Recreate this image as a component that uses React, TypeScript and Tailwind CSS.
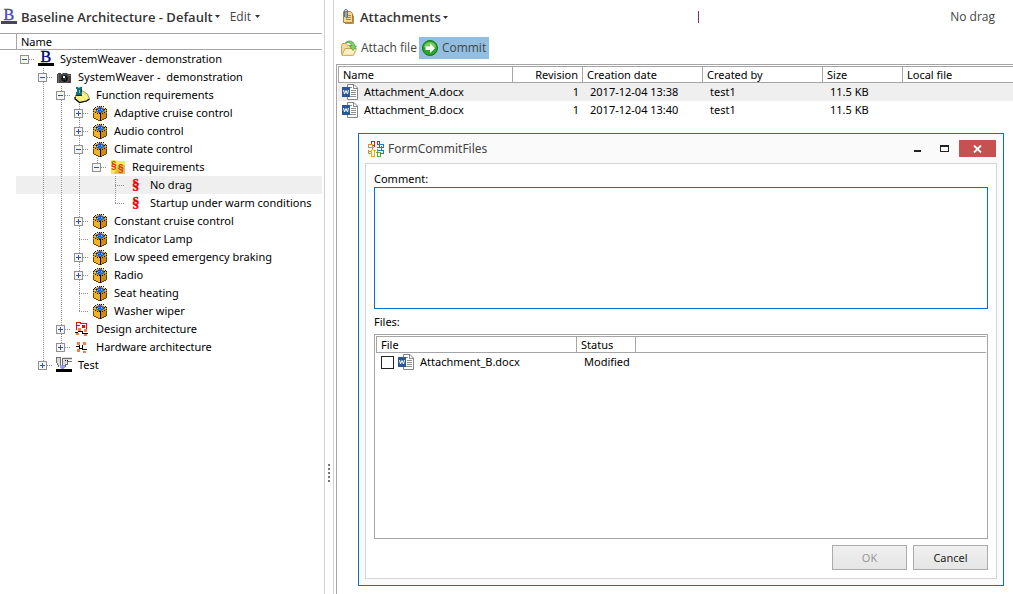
import type { ReactNode } from "react";

type IconName = "baseline" | "camera" | "note" | "box" | "requirements" | "section" | "design" | "hardware" | "test";

interface TreeItem {
  label: string;
  icon: IconName;
  expanded?: boolean;
  selected?: boolean;
  children?: TreeItem[];
}

const tree: TreeItem[] = [
  {
    label: "SystemWeaver - demonstration",
    icon: "baseline",
    expanded: true,
    children: [
      {
        label: "SystemWeaver -  demonstration",
        icon: "camera",
        expanded: true,
        children: [
          {
            label: "Function requirements",
            icon: "note",
            expanded: true,
            children: [
              { label: "Adaptive cruise control", icon: "box", expanded: false },
              { label: "Audio control", icon: "box", expanded: false },
              {
                label: "Climate control",
                icon: "box",
                expanded: true,
                children: [
                  {
                    label: "Requirements",
                    icon: "requirements",
                    expanded: true,
                    children: [
                      { label: "No drag", icon: "section", selected: true },
                      { label: "Startup under warm conditions", icon: "section" },
                    ],
                  },
                ],
              },
              { label: "Constant cruise control", icon: "box", expanded: false },
              { label: "Indicator Lamp", icon: "box" },
              { label: "Low speed emergency braking", icon: "box", expanded: false },
              { label: "Radio", icon: "box", expanded: false },
              { label: "Seat heating", icon: "box" },
              { label: "Washer wiper", icon: "box" },
            ],
          },
          { label: "Design architecture", icon: "design", expanded: false },
          { label: "Hardware architecture", icon: "hardware", expanded: false },
        ],
      },
      { label: "Test", icon: "test", expanded: false },
    ],
  },
];

const attachments = [
  { name: "Attachment_A.docx", revision: 1, created: "2017-12-04 13:38", by: "test1", size: "11.5 KB", selected: true },
  { name: "Attachment_B.docx", revision: 1, created: "2017-12-04 13:40", by: "test1", size: "11.5 KB", selected: false },
];

function Svg({ children, className = "size-4", crisp = false }: { children: ReactNode; className?: string; crisp?: boolean }) {
  return (
    <svg
      viewBox="0 0 16 16"
      className={`shrink-0 overflow-visible ${className}`}
      shapeRendering={crisp ? "crispEdges" : "auto"}
      aria-hidden="true"
    >
      {children}
    </svg>
  );
}

function BaselineIcon({ muted = false }: { muted?: boolean }) {
  return (
    <Svg>
      <text x="2.500" y="11" className="font-['Liberation_Serif'] text-[16px]" fill={muted ? "#4b4ba8" : "#00008b"} stroke={muted ? "#4b4ba8" : "#00008b"} strokeWidth=".4">
        B
      </text>
      <path d="M0 12h16v3H0z" fill={muted ? "#484848" : "#000"} />
    </Svg>
  );
}

function WordIcon() {
  return (
    <Svg>
      <path d="M5.500.5h6.500l3.500 3.500v11.500h-10z" fill="#fff" stroke="#858585" />
      <path d="M11.500.5v4h4" fill="none" stroke="#858585" />
      <path d="M8 3.500h2M9 6.500h5M9 8.500h5M9 10.500h5M8 12.500h6" stroke="#8f8f8f" />
      <path d="M0 3h8v10H0z" fill="#2b579a" />
      <path d="M1.500 6l1 4L4 6.500 5.500 10l1-4" fill="none" stroke="#fff" />
    </Svg>
  );
}

function NodeIcon({ name }: { name: IconName }) {
  switch (name) {
    case "baseline":
      return <BaselineIcon />;
    case "camera":
      return (
        <Svg>
          <path d="M1 5h1V4h3v1h1l1-1h4l1 1h3v9H1z" fill="#444" />
          <path d="M2.500 5v9M12 6.500h3" stroke="#6c6c6c" />
          <circle cx="8.500" cy="9.500" r="4" fill="#111" stroke="#5a5a5a" />
          <circle cx="8.500" cy="9.500" r="1.500" fill="#3a3a3a" />
          <path d="M7 7h2v2H7z" fill="#eee" />
        </Svg>
      );
    case "note":
      return (
        <Svg>
          <path d="M1.500 8l7-4 5 3 2 5-3 2-7 1.500-4-4z" fill="#f1ec74" stroke="#77722c" strokeWidth=".7" />
          <path d="M1 10v2l4.500 3.500 7-1.500 3-2" fill="none" stroke="#000" strokeWidth="1.200" />
          <path d="M5.500 9l4 4M8.500 7l4 4" stroke="#fffcc0" />
          <path d="M2 0h6v2H7v3h1v3H2V5h1V2H2z" fill="#176f78" />
          <path d="M4 0h2v1H4zM5 3h1v3H5z" fill="#5fd0d4" />
          <path d="M2 8.500h6M7.500 2v3" stroke="#08333a" />
        </Svg>
      );
    case "box":
      return (
        <Svg>
          <path d="M1 5l7-4 7 4v8l-7 3-7-3z" fill="#c58a14" />
          <path d="M1 6l7 3v7l-6-3z" fill="#f2b228" />
          <path d="M15 6l-7 3v7l6-3z" fill="#d08c0c" />
          <path d="M3 5l5-3 5 3-5 3.500z" fill="#1553c8" />
          <g shapeRendering="crispEdges">
            <path d="M6 4h2v1H6zM9 5h2v1H9zM7 6h2v1H7z" fill="#289df5" />
            <path d="M5 5h1v1H5zM9 4h1v1H9z" fill="#8cdcff" />
            <path d="M2 3h2v1H2zM4 2h2v1H4zM2 5h2v1H2zM5 1h1v1H5zM10 2h2v1h-2zM12 3h2v1h-2zM13 5h1v1h-1z" fill="#f5cf70" />
            <path d="M1 4h1v1H1zM3 2h1v1H3zM2 3h1v1H2zM5 1h1v1H5zM7 1h1v1H7zM9 1h1v1H9zM11 1h1v1h-1zM13 3h1v1h-1zM14 4h1v1h-1zM4 4h1v1H4zM12 4h1v1h-1zM1 6h1v1H1zM3 7h1v1H3zM5 8h1v1H5zM10 8h1v1h-1zM12 7h1v1h-1zM14 6h1v1h-1z" fill="#111" />
            <path d="M1 8h1v5H1zM14 8h1v5h-1zM2 13h2v1H2zM4 14h2v1H4zM6 15h4v1H6zM10 14h2v1h-2zM12 13h2v1h-2z" fill="#6b4604" />
            <path d="M7 8h2v1H7zM8 9h1v7H8z" fill="#000" />
          </g>
        </Svg>
      );
    case "requirements":
      return (
        <Svg>
          <path d="M1 1h5l1 1h8v13H1z" fill="#f5e957" />
          <path d="M8 6h7v9H4z" fill="#dfc53a" />
          <text x="1" y="10" className="font-['Liberation_Sans'] text-[10px] font-bold" fill="#e52c10">§</text>
          <text x="8" y="13" className="font-['Liberation_Sans'] text-[10px] font-bold" fill="#e52c10">§</text>
        </Svg>
      );
    case "section":
      return (
        <Svg>
          <text x="4" y="12" className="font-['Liberation_Serif'] text-[15px] font-bold" fill="#f00000" stroke="#f00000" strokeWidth=".4">§</text>
        </Svg>
      );
    case "design":
      return (
        <Svg crisp>
          <path d="M2.500 9V1.500h4v1M6 2.500h6.500V8M2 4.500h4" fill="none" stroke="#f00" />
          <path d="M8 4h3v3H8z" fill="#f00" />
          <path d="M1 11.500h3M4 10.500h4.500v2H14" fill="none" stroke="#000" />
          <path d="M4 7h3v3H4zM10 8h3v3h-3zM2 12h3v2H2zM10 13h3v2h-3z" fill="#f87a45" />
        </Svg>
      );
    case "hardware":
      return (
        <Svg crisp>
          <path d="M2 7.500h3.500M5.500 5v4h3M8.500 6v4.500H13" fill="none" stroke="#000" />
          <path d="M3 3h3v3H3zM9 3h3v3H9zM3 10h3v3H3zM9 12h3v2H9z" fill="#f87a45" />
        </Svg>
      );
    case "test":
      return (
        <Svg crisp>
          <path d="M1 0h3v9H3L1 6zM6 0h10v3h-4v3h-2v3H6z" fill="#dcdcdc" />
          <path d="M.5 0v6M1.500 6v2M2.500 8v2M0 .5h4M4.500 0v9M6.500 1v8M7 1.500h9M12 4.500h4M11.500 4v3M9 7.500h3M9.500 7v3" fill="none" stroke="#707070" />
          <path d="M4 8h5v3H8v1H5v-1H4z" fill="#9b95f5" />
          <path d="M9 3h1v1H9zM11 3h1v1h-1z" fill="#111" />
          <path d="M0 12h16v3H0z" fill="#000" />
        </Svg>
      );
  }
}

interface GuideProps {
  above?: boolean;
  below?: boolean;
  branch?: boolean;
  expanded?: boolean;
}

function Guide({ above, below, branch, expanded }: GuideProps) {
  return (
    <svg viewBox="0 0 18 18" className="size-4.5 shrink-0" shapeRendering="crispEdges" aria-hidden="true">
      <g stroke="#909090" strokeDasharray="1 1" fill="none">
        {above ? <path d="M9.500 0v9" /> : null}
        {below ? <path d="M9.500 10v8" /> : null}
        {branch ? <path d="M9 9.500h9" /> : null}
      </g>
      {expanded !== undefined ? (
        <>
          <rect x="4.500" y="5.500" width="8" height="8" fill="#f4f4f4" stroke="#919191" />
          <path d={expanded ? "M6 9.500h5" : "M6 9.500h5M8.500 7v5"} stroke="#35569c" />
        </>
      ) : null}
    </svg>
  );
}

interface TreeRowsProps {
  items: TreeItem[];
  trail?: boolean[];
}

// trail holds, for every ancestor level, whether its vertical line goes on
function TreeRows({ items, trail = [] }: TreeRowsProps) {
  return (
    <ul role={trail.length === 0 ? "tree" : "group"}>
      {items.map((item, index) => {
        const last = index === items.length - 1;
        return (
          <li key={item.label} role="treeitem" aria-expanded={item.expanded} aria-selected={item.selected ?? false}>
            <div className={`ml-4 flex h-4.5 items-center ${item.selected ? "bg-[#efefef]" : ""}`}>
              {trail.map((open, level) => (
                <Guide key={level} above={open} below={open} />
              ))}
              <Guide above={trail.length > 0} below={!last} branch expanded={item.expanded} />
              <span className="mr-1.5 ml-1 flex">
                <NodeIcon name={item.icon} />
              </span>
              <span className="whitespace-pre">{item.label}</span>
            </div>
            {item.children ? <TreeRows items={item.children} trail={[...trail, !last]} /> : null}
          </li>
        );
      })}
    </ul>
  );
}

function Caret() {
  return (
    <svg viewBox="0 0 5 3" className="h-[3px] w-[5px] shrink-0" aria-hidden="true">
      <path d="M0 0h5L2.500 3z" fill="#333" />
    </svg>
  );
}

function StructurePanel() {
  return (
    <section className="w-[325px] shrink-0 border-r border-[#d0d0d0] pr-0.5">
      <header className="flex h-[33px] items-center text-[#444]">
        <span className="mr-1 ml-px flex">
          <BaselineIcon muted />
        </span>
        <button type="button" className="flex items-center gap-0.5 font-['Open_Sans','Noto_Sans',sans-serif] text-[13px] font-semibold whitespace-nowrap text-[#333]">
          Baseline Architecture - Default
          <Caret />
        </button>
        <button type="button" className="ml-2.5 flex items-center gap-1 font-['Open_Sans','Noto_Sans',sans-serif] text-xs">
          Edit
          <Caret />
        </button>
      </header>
      <div className="flex h-[17px] items-center border-y border-[#a5a5a5]">
        <span className="h-full w-[17px] border-r border-[#a5a5a5]" />
        <span className="pl-1">Name</span>
      </div>
      <TreeRows items={tree} />
    </section>
  );
}

function Splitter() {
  return (
    <div role="separator" className="flex w-[9px] shrink-0 flex-col items-center border-r border-[#d0d0d0]">
      <div className="grow-4 pt-4" />
      <div className="flex flex-col gap-0.5">
        {[0, 1, 2, 3, 4].map((dot) => (
          <span key={dot} className="size-0.5 bg-[#777]" />
        ))}
      </div>
      <div className="grow" />
    </div>
  );
}

function Toolbar() {
  return (
    <div className="flex h-[30px] items-start gap-0.5 pt-[3px] pl-0.5 font-['Open_Sans','Noto_Sans',sans-serif] text-xs text-[#444]">
      <button type="button" className="flex h-[22px] items-center gap-1 pl-[3px] whitespace-nowrap">
        <Svg>
          <path d="M.5 14V5.500l1-2h4l1 2h5V9" fill="#f3dba0" stroke="#c0a05c" />
          <path d="M.8 15.300L4 8.500h11.500l-3 6.800z" fill="#fdf0c4" stroke="#c9a24f" />
          <path d="M4.500 2.500C8-.5 13.500 1 13.500 6h2L12 10.500 8.500 6h2c0-2.500-2.500-4-6-3.500z" fill="#7fd067" stroke="#3b9a3a" strokeWidth=".7" />
        </Svg>
        Attach file
      </button>
      <button type="button" className="flex h-[22px] items-center gap-1 bg-[#92bfe1] px-[3px]">
        <Svg>
          <circle cx="8" cy="8" r="7.500" fill="#2ca32a" stroke="#16771a" />
          <path d="M2 7a6.200 6.200 0 0 1 12 0C11 8.500 5 8.500 2 7z" fill="#78cf5f" />
          <path d="M3.500 6.500H8v-3l5 4.700-5 4.700v-3H3.500z" fill="#fff" />
        </Svg>
        Commit
      </button>
    </div>
  );
}

const th = "border-y border-r border-[#a5a5a5] p-0 px-1 leading-[15px] text-left font-normal";

function AttachmentTable() {
  return (
    <div className="grow border-t border-l border-[#a5a5a5] pt-px pl-px">
      <table className="w-full table-fixed border-separate border-spacing-0">
        <colgroup>
          <col className="w-[175px]" />
          <col className="w-[70px]" />
          <col className="w-[120px]" />
          <col className="w-[120px]" />
          <col className="w-[80px]" />
          <col />
        </colgroup>
        <thead>
          <tr>
            <th className={`${th} border-l`}>Name</th>
            <th className="border-y border-r border-[#a5a5a5] p-0 px-1 text-right leading-[15px] font-normal">Revision</th>
            <th className={th}>Creation date</th>
            <th className={th}>Created by</th>
            <th className={th}>Size</th>
            <th className="border-y border-[#a5a5a5] p-0 px-1 text-left leading-[15px] font-normal">Local file</th>
          </tr>
        </thead>
        <tbody>
          {attachments.map((file) => (
            <tr key={file.name} className={`h-4.5 ${file.selected ? "bg-[#efefef]" : ""}`}>
              <td className="p-0 pl-1">
                <span className="flex items-center gap-1.5">
                  <WordIcon />
                  {file.name}
                </span>
              </td>
              <td className="p-0 pr-1 text-right">{file.revision}</td>
              <td className="p-0 pl-[7px]">{file.created}</td>
              <td className="p-0 pl-[7px]">{file.by}</td>
              <td className="p-0 pl-[7px]">{file.size}</td>
              <td className="p-0" />
            </tr>
          ))}
        </tbody>
      </table>
    </div>
  );
}

function WeaveIcon() {
  return (
    <Svg crisp>
      <g fill="none">
        <path d="M3.500 3V1M3 .5h4M6.500 0v6M9.500 0v4M9 .5h3M11.500 1v5M4 4.500h2" stroke="#c4262e" />
        <path d="M1 3.500h4M.5 3v4M1 6.500h5M4.500 4v5M0 10.500h4M.5 9v4M1 12.500h2" stroke="#ee8a1f" />
        <path d="M3.500 9v6M3 15.500h4M6.500 9v6M5 9.500h3" stroke="#dcb51c" />
        <path d="M9.500 8v8M10 15.500h3M12.500 11v4M8 11.500h4" stroke="#63a844" />
        <path d="M10 3.500h6M15.500 4v3M9 6.500h6M10 9.500h6M15.500 10v3M12 12.500h3M13.500 5v4" stroke="#1b80ba" />
      </g>
    </Svg>
  );
}

function CommitDialog() {
  return (
    <div
      role="dialog"
      aria-labelledby="commit-title"
      className="absolute top-[133px] right-[9px] bottom-2 left-6 flex flex-col border border-[#0a72c6] bg-[#fafafa] px-1.5 pb-1.5"
    >
      <header className="flex h-[29px] shrink-0 items-start">
        <h2 id="commit-title" className="flex h-[29px] grow items-center gap-1 pl-[3px] text-xs text-[#444]">
          <WeaveIcon />
          FormCommitFiles
        </h2>
        <button type="button" aria-label="Minimize" className="mt-1.5 flex h-[17px] w-[27px] justify-center">
          <span className="mt-2.5 h-0.5 w-[7px] bg-[#222]" />
        </button>
        <button type="button" aria-label="Maximize" className="mt-1.5 flex h-[17px] w-[27px] justify-center">
          <span className="mt-[5px] h-[7px] w-[9px] border border-t-2 border-[#222]" />
        </button>
        <button type="button" aria-label="Close" className="mt-1.5 mr-px ml-px flex h-[17px] w-[37px] items-center justify-center bg-[#c75050]">
          <svg viewBox="0 0 9 8" className="h-2 w-[9px]" aria-hidden="true">
            <path d="M1 .5l7 7M8 .5l-7 7" stroke="#fff" strokeWidth="1.800" />
          </svg>
        </button>
      </header>

      <form className="flex grow flex-col border border-[#d5d5d5] bg-white px-2 pt-[7px] pb-2" onSubmit={(event) => event.preventDefault()}>
        <label htmlFor="comment">Comment:</label>
        <textarea id="comment" className="h-[122px] shrink-0 resize-none border border-[#0a72c6] outline-none" />

        <h3 className="mt-[5px] mb-1">Files:</h3>
        <div className="grow border border-[#a5a5a5] p-px">
          <table className="w-full table-fixed border-separate border-spacing-0">
            <colgroup>
              <col className="w-[201px]" />
              <col className="w-[59px]" />
              <col />
            </colgroup>
            <thead>
              <tr>
                <th className={`${th} border-l`}>File</th>
                <th className={th}>Status</th>
                <th className="border-y border-[#a5a5a5] p-0" />
              </tr>
            </thead>
            <tbody>
              <tr className="h-4.5">
                <td className="p-0 pl-[5px]">
                  <label className="flex items-center">
                    <input type="checkbox" className="mr-1 size-[13px] shrink-0 appearance-none border border-[#222] bg-white checked:bg-[#0a72c6]" />
                    <WordIcon />
                    <span className="ml-1.5">Attachment_B.docx</span>
                  </label>
                </td>
                <td className="p-0 pl-[7px]">Modified</td>
                <td className="p-0" />
              </tr>
            </tbody>
          </table>
        </div>

        <div className="mt-1.5 flex justify-end gap-1.5">
          <button type="submit" disabled className="h-[25px] w-[75px] border border-[#ababab] bg-linear-to-b from-[#f0f0f0] to-[#e5e5e5] text-[#999]">
            OK
          </button>
          <button type="button" className="h-[25px] w-[75px] border border-[#ababab] bg-linear-to-b from-[#f0f0f0] to-[#e5e5e5] text-[#222]">
            Cancel
          </button>
        </div>
      </form>
    </div>
  );
}

function AttachmentsPanel() {
  return (
    <section className="relative flex min-w-0 grow flex-col pl-0.5">
      <header className="flex h-[34px] shrink-0 items-center pr-4.5 pl-1 font-['Open_Sans','Noto_Sans',sans-serif] text-[#444]">
        <button type="button" className="flex items-center gap-0.5 text-[13px] font-semibold text-[#333]">
          <Svg className="mr-0.5 size-4">
            <path d="M3.500 2.500h7l2 2v9h-9z" fill="#f2d88f" stroke="#a8803a" />
            <path d="M5 14.500h8.500v-8" fill="none" stroke="#b58e45" />
            <path d="M8 6.500h3M6 8.500h5M6 10.500h5" stroke="#b08a45" />
            <path d="M4.500 8V2q0-1.500 1.500-1.500T7.500 2v6q0 1-.8 1T6 8V3" fill="none" stroke="#5b6fa0" />
          </Svg>
          Attachments
          <Caret />
        </button>
        <span className="mx-auto h-3 w-px bg-[#7a2f7a]" />
        <span className="text-xs">No drag</span>
      </header>
      <Toolbar />
      <AttachmentTable />
      <CommitDialog />
    </section>
  );
}

export default function App() {
  return (
    <main className="flex h-screen overflow-hidden bg-white font-['Noto_Sans','Open_Sans',sans-serif] text-[11px] leading-4 text-black">
      <StructurePanel />
      <Splitter />
      <AttachmentsPanel />
    </main>
  );
}
